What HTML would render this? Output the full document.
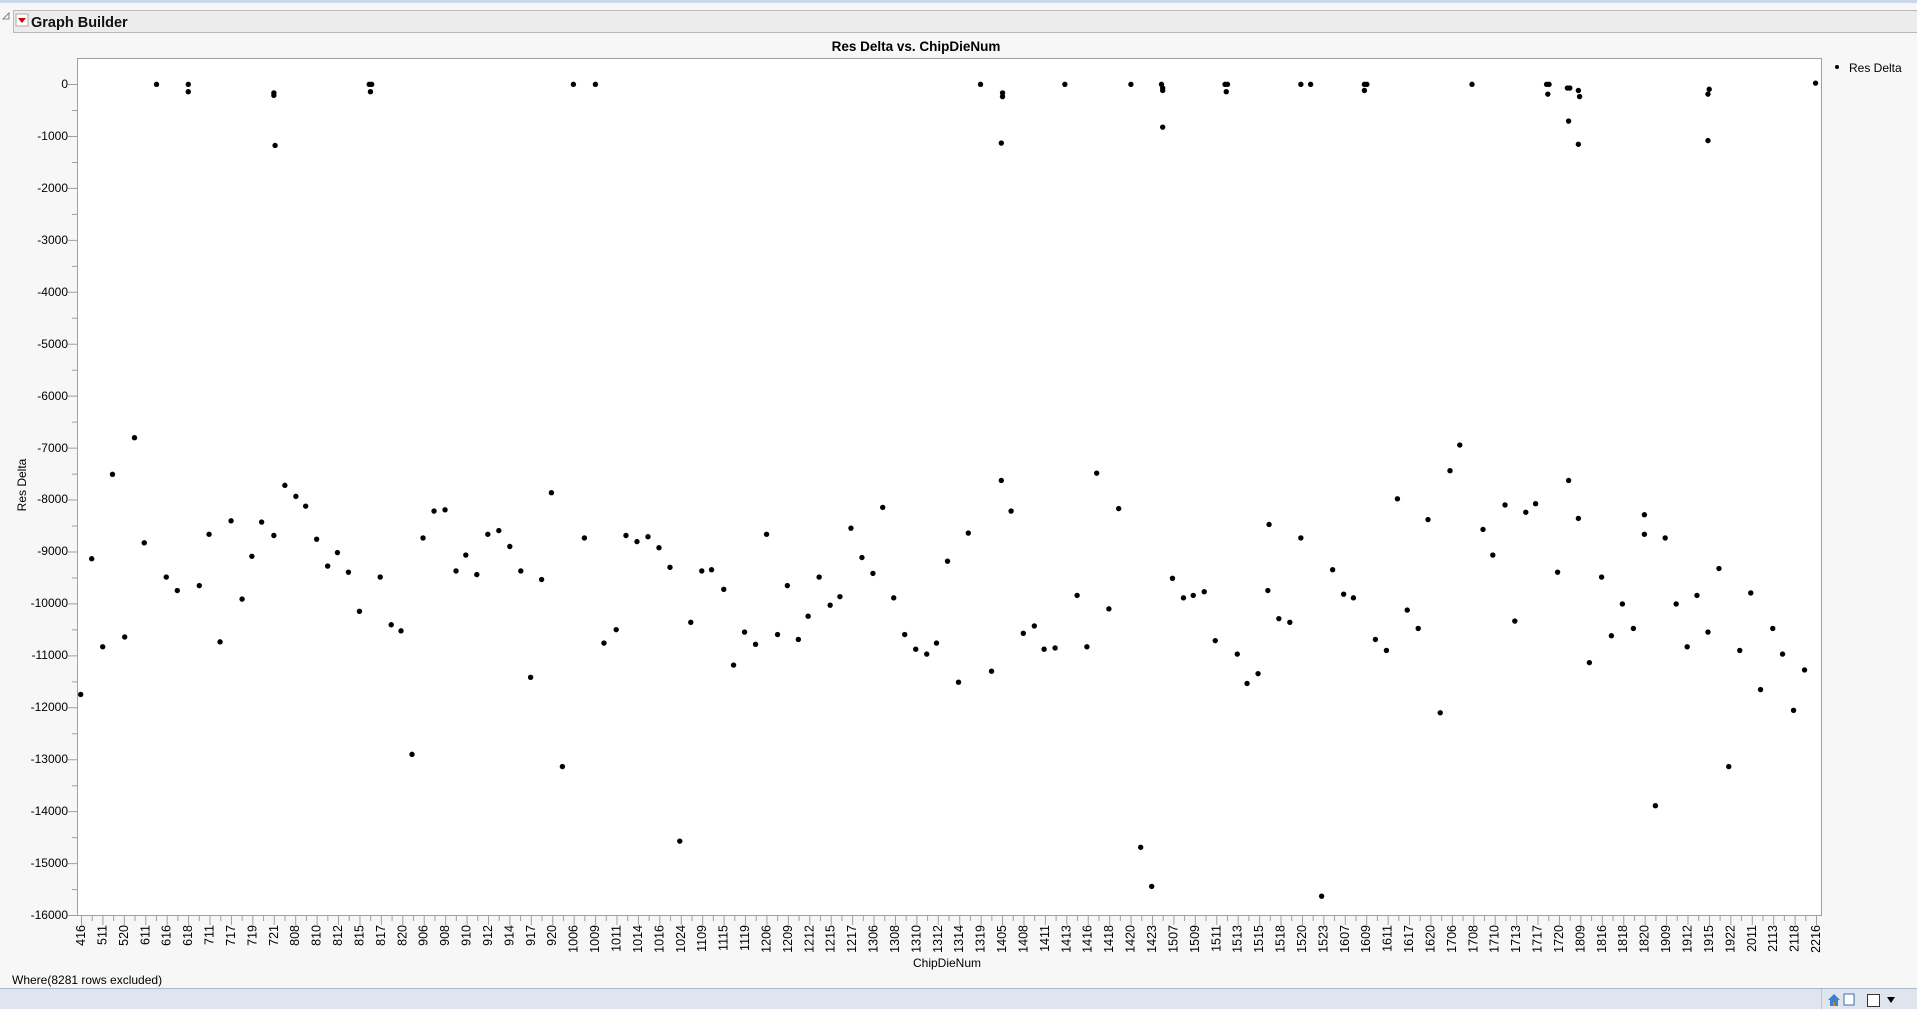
<!DOCTYPE html>
<html><head><meta charset="utf-8"><style>
html,body{margin:0;padding:0;width:1917px;height:1009px;overflow:hidden;background:#f7f7f7;font-family:"Liberation Sans",Arial,sans-serif}
svg{position:absolute;left:0;top:0}
</style></head><body>
<svg width="1917" height="1009" viewBox="0 0 1917 1009" font-family="Liberation Sans, Arial, sans-serif">
<rect x="0" y="0" width="1917" height="3" fill="#c9d8ea"/>
<rect x="13.5" y="10.5" width="1910" height="22" fill="#ececec" stroke="#b9b9b9"/>
<path d="M3 19 L9 13 L9 19 Z" fill="none" stroke="#666" stroke-width="0.8"/>
<rect x="16" y="14" width="12" height="12" fill="#fff" stroke="#aaa"/>
<path d="M18 18 L26 18 L22 23 Z" fill="#c00"/>
<text x="31" y="27" font-size="14.5" font-weight="bold" fill="#111">Graph Builder</text>
<text x="916" y="51" font-size="13.5" font-weight="bold" text-anchor="middle" fill="#000">Res Delta vs. ChipDieNum</text>
<rect x="77.5" y="58.5" width="1744" height="857" fill="#fff" stroke="#a0a0a0"/>
<line x1="72.5" y1="84" x2="72.5" y2="916" stroke="#a0a0a0" stroke-width="9" stroke-dasharray="1 50.94"/>
<line x1="74.5" y1="110" x2="74.5" y2="916" stroke="#a0a0a0" stroke-width="5" stroke-dasharray="1 50.94"/>
<line x1="81" y1="920.5" x2="1822" y2="920.5" stroke="#a0a0a0" stroke-width="9" stroke-dasharray="1 20.42"/>
<line x1="91.7" y1="918.5" x2="1822" y2="918.5" stroke="#a0a0a0" stroke-width="5" stroke-dasharray="1 20.42"/>
<g font-size="12" text-anchor="end" fill="#000">
<text x="68" y="88">0</text><text x="68" y="140">-1000</text><text x="68" y="192">-2000</text><text x="68" y="244">-3000</text><text x="68" y="296">-4000</text><text x="68" y="348">-5000</text><text x="68" y="400">-6000</text><text x="68" y="452">-7000</text><text x="68" y="503">-8000</text><text x="68" y="555">-9000</text><text x="68" y="607">-10000</text><text x="68" y="659">-11000</text><text x="68" y="711">-12000</text><text x="68" y="763">-13000</text><text x="68" y="815">-14000</text><text x="68" y="867">-15000</text><text x="68" y="919">-16000</text>
</g>
<text transform="translate(26,485) rotate(-90)" font-size="12" text-anchor="middle">Res Delta</text>
<text x="947" y="967" font-size="12" text-anchor="middle">ChipDieNum</text>
<circle cx="1837" cy="67" r="2" fill="#000"/><text x="1849" y="72" font-size="12">Res Delta</text>
<g font-size="12.5" text-anchor="end">
<text transform="translate(85,925) rotate(-90)">416</text><text transform="translate(106.4,925) rotate(-90)">511</text><text transform="translate(127.8,925) rotate(-90)">520</text><text transform="translate(149.3,925) rotate(-90)">611</text><text transform="translate(170.7,925) rotate(-90)">616</text><text transform="translate(192.1,925) rotate(-90)">618</text><text transform="translate(213.5,925) rotate(-90)">711</text><text transform="translate(234.9,925) rotate(-90)">717</text><text transform="translate(256.4,925) rotate(-90)">719</text><text transform="translate(277.8,925) rotate(-90)">721</text><text transform="translate(299.2,925) rotate(-90)">808</text><text transform="translate(320.6,925) rotate(-90)">810</text><text transform="translate(342,925) rotate(-90)">812</text><text transform="translate(363.5,925) rotate(-90)">815</text><text transform="translate(384.9,925) rotate(-90)">817</text><text transform="translate(406.3,925) rotate(-90)">820</text><text transform="translate(427.7,925) rotate(-90)">906</text><text transform="translate(449.1,925) rotate(-90)">908</text><text transform="translate(470.6,925) rotate(-90)">910</text><text transform="translate(492,925) rotate(-90)">912</text><text transform="translate(513.4,925) rotate(-90)">914</text><text transform="translate(534.8,925) rotate(-90)">917</text><text transform="translate(556.2,925) rotate(-90)">920</text><text transform="translate(577.7,925) rotate(-90)">1006</text><text transform="translate(599.1,925) rotate(-90)">1009</text><text transform="translate(620.5,925) rotate(-90)">1011</text><text transform="translate(641.9,925) rotate(-90)">1014</text><text transform="translate(663.3,925) rotate(-90)">1016</text><text transform="translate(684.8,925) rotate(-90)">1024</text><text transform="translate(706.2,925) rotate(-90)">1109</text><text transform="translate(727.6,925) rotate(-90)">1115</text><text transform="translate(749,925) rotate(-90)">1119</text><text transform="translate(770.4,925) rotate(-90)">1206</text><text transform="translate(791.9,925) rotate(-90)">1209</text><text transform="translate(813.3,925) rotate(-90)">1212</text><text transform="translate(834.7,925) rotate(-90)">1215</text><text transform="translate(856.1,925) rotate(-90)">1217</text><text transform="translate(877.5,925) rotate(-90)">1306</text><text transform="translate(899,925) rotate(-90)">1308</text><text transform="translate(920.4,925) rotate(-90)">1310</text><text transform="translate(941.8,925) rotate(-90)">1312</text><text transform="translate(963.2,925) rotate(-90)">1314</text><text transform="translate(984.6,925) rotate(-90)">1319</text><text transform="translate(1006.1,925) rotate(-90)">1405</text><text transform="translate(1027.5,925) rotate(-90)">1408</text><text transform="translate(1048.9,925) rotate(-90)">1411</text><text transform="translate(1070.3,925) rotate(-90)">1413</text><text transform="translate(1091.7,925) rotate(-90)">1416</text><text transform="translate(1113.2,925) rotate(-90)">1418</text><text transform="translate(1134.6,925) rotate(-90)">1420</text><text transform="translate(1156,925) rotate(-90)">1423</text><text transform="translate(1177.4,925) rotate(-90)">1507</text><text transform="translate(1198.8,925) rotate(-90)">1509</text><text transform="translate(1220.3,925) rotate(-90)">1511</text><text transform="translate(1241.7,925) rotate(-90)">1513</text><text transform="translate(1263.1,925) rotate(-90)">1515</text><text transform="translate(1284.5,925) rotate(-90)">1518</text><text transform="translate(1305.9,925) rotate(-90)">1520</text><text transform="translate(1327.4,925) rotate(-90)">1523</text><text transform="translate(1348.8,925) rotate(-90)">1607</text><text transform="translate(1370.2,925) rotate(-90)">1609</text><text transform="translate(1391.6,925) rotate(-90)">1611</text><text transform="translate(1413,925) rotate(-90)">1617</text><text transform="translate(1434.5,925) rotate(-90)">1620</text><text transform="translate(1455.9,925) rotate(-90)">1706</text><text transform="translate(1477.3,925) rotate(-90)">1708</text><text transform="translate(1498.7,925) rotate(-90)">1710</text><text transform="translate(1520.1,925) rotate(-90)">1713</text><text transform="translate(1541.6,925) rotate(-90)">1717</text><text transform="translate(1563,925) rotate(-90)">1720</text><text transform="translate(1584.4,925) rotate(-90)">1809</text><text transform="translate(1605.8,925) rotate(-90)">1816</text><text transform="translate(1627.2,925) rotate(-90)">1818</text><text transform="translate(1648.7,925) rotate(-90)">1820</text><text transform="translate(1670.1,925) rotate(-90)">1909</text><text transform="translate(1691.5,925) rotate(-90)">1912</text><text transform="translate(1712.9,925) rotate(-90)">1915</text><text transform="translate(1734.3,925) rotate(-90)">1922</text><text transform="translate(1755.8,925) rotate(-90)">2011</text><text transform="translate(1777.2,925) rotate(-90)">2113</text><text transform="translate(1798.6,925) rotate(-90)">2118</text><text transform="translate(1820,925) rotate(-90)">2216</text>
</g>
<g transform="scale(1.2226)" fill="#000">
<circle cx="66" cy="568" r="2.2"/><circle cx="75" cy="457" r="2.2"/><circle cx="84" cy="529" r="2.2"/><circle cx="92" cy="388" r="2.2"/><circle cx="102" cy="521" r="2.2"/><circle cx="110" cy="358" r="2.2"/><circle cx="118" cy="444" r="2.2"/><circle cx="128" cy="69" r="2.2"/><circle cx="136" cy="472" r="2.2"/><circle cx="145" cy="483" r="2.2"/><circle cx="154" cy="69" r="2.2"/><circle cx="154" cy="75" r="2.2"/><circle cx="163" cy="479" r="2.2"/><circle cx="171" cy="437" r="2.2"/><circle cx="180" cy="525" r="2.2"/><circle cx="189" cy="426" r="2.2"/><circle cx="198" cy="490" r="2.2"/><circle cx="206" cy="455" r="2.2"/><circle cx="214" cy="427" r="2.2"/><circle cx="224" cy="438" r="2.2"/><circle cx="224" cy="76" r="2.2"/><circle cx="224" cy="78" r="2.2"/><circle cx="225" cy="119" r="2.2"/><circle cx="233" cy="397" r="2.2"/><circle cx="242" cy="406" r="2.2"/><circle cx="250" cy="414" r="2.2"/><circle cx="259" cy="441" r="2.2"/><circle cx="268" cy="463" r="2.2"/><circle cx="276" cy="452" r="2.2"/><circle cx="285" cy="468" r="2.2"/><circle cx="294" cy="500" r="2.2"/><circle cx="302" cy="69" r="2.2"/><circle cx="303" cy="75" r="2.2"/><circle cx="304" cy="69" r="2.2"/><circle cx="311" cy="472" r="2.2"/><circle cx="320" cy="511" r="2.2"/><circle cx="328" cy="516" r="2.2"/><circle cx="337" cy="617" r="2.2"/><circle cx="346" cy="440" r="2.2"/><circle cx="355" cy="418" r="2.2"/><circle cx="364" cy="417" r="2.2"/><circle cx="373" cy="467" r="2.2"/><circle cx="381" cy="454" r="2.2"/><circle cx="390" cy="470" r="2.2"/><circle cx="399" cy="437" r="2.2"/><circle cx="408" cy="434" r="2.2"/><circle cx="417" cy="447" r="2.2"/><circle cx="426" cy="467" r="2.2"/><circle cx="434" cy="554" r="2.2"/><circle cx="443" cy="474" r="2.2"/><circle cx="451" cy="403" r="2.2"/><circle cx="460" cy="627" r="2.2"/><circle cx="469" cy="69" r="2.2"/><circle cx="478" cy="440" r="2.2"/><circle cx="487" cy="69" r="2.2"/><circle cx="494" cy="526" r="2.2"/><circle cx="504" cy="515" r="2.2"/><circle cx="512" cy="438" r="2.2"/><circle cx="521" cy="443" r="2.2"/><circle cx="530" cy="439" r="2.2"/><circle cx="539" cy="448" r="2.2"/><circle cx="548" cy="464" r="2.2"/><circle cx="556" cy="688" r="2.2"/><circle cx="565" cy="509" r="2.2"/><circle cx="574" cy="467" r="2.2"/><circle cx="582" cy="466" r="2.2"/><circle cx="592" cy="482" r="2.2"/><circle cx="600" cy="544" r="2.2"/><circle cx="609" cy="517" r="2.2"/><circle cx="618" cy="527" r="2.2"/><circle cx="627" cy="437" r="2.2"/><circle cx="636" cy="519" r="2.2"/><circle cx="644" cy="479" r="2.2"/><circle cx="653" cy="523" r="2.2"/><circle cx="661" cy="504" r="2.2"/><circle cx="670" cy="472" r="2.2"/><circle cx="679" cy="495" r="2.2"/><circle cx="687" cy="488" r="2.2"/><circle cx="696" cy="432" r="2.2"/><circle cx="705" cy="456" r="2.2"/><circle cx="714" cy="469" r="2.2"/><circle cx="722" cy="415" r="2.2"/><circle cx="731" cy="489" r="2.2"/><circle cx="740" cy="519" r="2.2"/><circle cx="749" cy="531" r="2.2"/><circle cx="758" cy="535" r="2.2"/><circle cx="766" cy="526" r="2.2"/><circle cx="775" cy="459" r="2.2"/><circle cx="784" cy="558" r="2.2"/><circle cx="792" cy="436" r="2.2"/><circle cx="802" cy="69" r="2.2"/><circle cx="811" cy="549" r="2.2"/><circle cx="819" cy="393" r="2.2"/><circle cx="819" cy="117" r="2.2"/><circle cx="820" cy="76" r="2.2"/><circle cx="820" cy="79" r="2.2"/><circle cx="827" cy="418" r="2.2"/><circle cx="837" cy="518" r="2.2"/><circle cx="846" cy="512" r="2.2"/><circle cx="854" cy="531" r="2.2"/><circle cx="863" cy="530" r="2.2"/><circle cx="871" cy="69" r="2.2"/><circle cx="881" cy="487" r="2.2"/><circle cx="889" cy="529" r="2.2"/><circle cx="897" cy="387" r="2.2"/><circle cx="907" cy="498" r="2.2"/><circle cx="915" cy="416" r="2.2"/><circle cx="925" cy="69" r="2.2"/><circle cx="933" cy="693" r="2.2"/><circle cx="942" cy="725" r="2.2"/><circle cx="950" cy="69" r="2.2"/><circle cx="951" cy="72" r="2.2"/><circle cx="951" cy="74" r="2.2"/><circle cx="951" cy="104" r="2.2"/><circle cx="959" cy="473" r="2.2"/><circle cx="968" cy="489" r="2.2"/><circle cx="976" cy="487" r="2.2"/><circle cx="985" cy="484" r="2.2"/><circle cx="994" cy="524" r="2.2"/><circle cx="1002" cy="69" r="2.2"/><circle cx="1003" cy="75" r="2.2"/><circle cx="1004" cy="69" r="2.2"/><circle cx="1012" cy="535" r="2.2"/><circle cx="1020" cy="559" r="2.2"/><circle cx="1029" cy="551" r="2.2"/><circle cx="1037" cy="483" r="2.2"/><circle cx="1038" cy="429" r="2.2"/><circle cx="1046" cy="506" r="2.2"/><circle cx="1055" cy="509" r="2.2"/><circle cx="1064" cy="440" r="2.2"/><circle cx="1064" cy="69" r="2.2"/><circle cx="1072" cy="69" r="2.2"/><circle cx="1081" cy="733" r="2.2"/><circle cx="1090" cy="466" r="2.2"/><circle cx="1099" cy="486" r="2.2"/><circle cx="1107" cy="489" r="2.2"/><circle cx="1116" cy="69" r="2.2"/><circle cx="1116" cy="74" r="2.2"/><circle cx="1118" cy="69" r="2.2"/><circle cx="1125" cy="523" r="2.2"/><circle cx="1134" cy="532" r="2.2"/><circle cx="1143" cy="408" r="2.2"/><circle cx="1151" cy="499" r="2.2"/><circle cx="1160" cy="514" r="2.2"/><circle cx="1168" cy="425" r="2.2"/><circle cx="1178" cy="583" r="2.2"/><circle cx="1186" cy="385" r="2.2"/><circle cx="1194" cy="364" r="2.2"/><circle cx="1204" cy="69" r="2.2"/><circle cx="1213" cy="433" r="2.2"/><circle cx="1221" cy="454" r="2.2"/><circle cx="1231" cy="413" r="2.2"/><circle cx="1239" cy="508" r="2.2"/><circle cx="1248" cy="419" r="2.2"/><circle cx="1256" cy="412" r="2.2"/><circle cx="1265" cy="69" r="2.2"/><circle cx="1266" cy="77" r="2.2"/><circle cx="1267" cy="69" r="2.2"/><circle cx="1274" cy="468" r="2.2"/><circle cx="1282" cy="72" r="2.2"/><circle cx="1283" cy="99" r="2.2"/><circle cx="1284" cy="72" r="2.2"/><circle cx="1291" cy="74" r="2.2"/><circle cx="1291" cy="118" r="2.2"/><circle cx="1292" cy="79" r="2.2"/><circle cx="1291" cy="424" r="2.2"/><circle cx="1283" cy="393" r="2.2"/><circle cx="1300" cy="542" r="2.2"/><circle cx="1310" cy="472" r="2.2"/><circle cx="1318" cy="520" r="2.2"/><circle cx="1327" cy="494" r="2.2"/><circle cx="1336" cy="514" r="2.2"/><circle cx="1345" cy="421" r="2.2"/><circle cx="1345" cy="437" r="2.2"/><circle cx="1354" cy="659" r="2.2"/><circle cx="1362" cy="440" r="2.2"/><circle cx="1371" cy="494" r="2.2"/><circle cx="1380" cy="529" r="2.2"/><circle cx="1388" cy="487" r="2.2"/><circle cx="1397" cy="517" r="2.2"/><circle cx="1397" cy="77" r="2.2"/><circle cx="1397" cy="115" r="2.2"/><circle cx="1398" cy="73" r="2.2"/><circle cx="1406" cy="465" r="2.2"/><circle cx="1414" cy="627" r="2.2"/><circle cx="1423" cy="532" r="2.2"/><circle cx="1432" cy="485" r="2.2"/><circle cx="1440" cy="564" r="2.2"/><circle cx="1450" cy="514" r="2.2"/><circle cx="1458" cy="535" r="2.2"/><circle cx="1467" cy="581" r="2.2"/><circle cx="1476" cy="548" r="2.2"/><circle cx="1485" cy="68" r="2.2"/>
</g>
<text x="12" y="984" font-size="12">Where(8281 rows excluded)</text>
<rect x="0" y="988" width="1917" height="21" fill="#dfe5ee"/>
<line x1="0" y1="988.5" x2="1917" y2="988.5" stroke="#a9b8cc"/>
<line x1="1821.5" y1="989" x2="1821.5" y2="1009" stroke="#b8c2d0"/>
<path d="M1828 1000 L1834 994 L1840 1000 Z" fill="#3a7fd0"/><rect x="1830" y="1000" width="8" height="6" fill="#3a7fd0"/><rect x="1833" y="1002" width="2" height="4" fill="#c80"/>
<rect x="1844" y="994" width="10" height="11" fill="#fff" stroke="#3a6fb0"/>
<rect x="1867.5" y="994.5" width="12" height="12" fill="#fff" stroke="#333"/>
<path d="M1887 997 L1895 997 L1891 1003 Z" fill="#000"/>
</svg>
</body></html>
